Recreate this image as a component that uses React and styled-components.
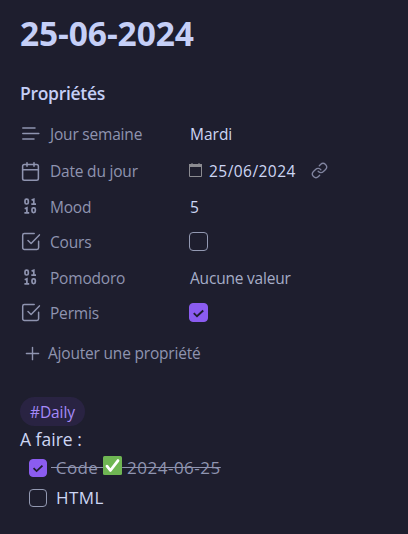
import React, { useState } from "react";
import styled, { createGlobalStyle } from "styled-components";
import { Calendar, Link, Plus } from "lucide-react";

const properties = [
  { name: "Jour semaine", icon: "text", value: "Mardi", height: 36 },
  { name: "Date du jour", icon: "date", value: "25/06/2024", height: 38 },
  { name: "Mood", icon: "number", value: "5", height: 34 },
  { name: "Cours", icon: "checkbox", value: false, height: 35 },
  { name: "Pomodoro", icon: "number", value: null, height: 37 },
  { name: "Permis", icon: "checkbox", value: true, height: 33 },
];

const TextIcon = () => (
  <svg width="21" height="20" viewBox="0 0 21 20" fill="none" stroke="currentColor" strokeWidth="1.5" strokeLinecap="round">
    <path d="M2.8 4H15M2.8 9.5h16M2.8 15H14" />
  </svg>
);

const NumberIcon = () => (
  <svg width="21" height="20" viewBox="0 0 21 20" fill="none" stroke="currentColor" strokeWidth="1.7">
    <rect x="5" y="2.2" width="3.3" height="4.8" rx="1.5" />
    <path d="M11.6 3.1l2.2-.9v5M11.3 7.2H16" />
    <path d="M4.7 11.7l2.2-.9v5M4.4 15.8h4.8" />
    <rect x="12" y="10.8" width="3.3" height="4.8" rx="1.5" />
  </svg>
);

const CheckboxIcon = () => (
  <svg width="21" height="20" viewBox="0 0 21 20" fill="none" stroke="currentColor" strokeWidth="1.5" strokeLinecap="round" strokeLinejoin="round">
    <path d="m8 8.5 3.1 3 8.3-8.6" />
    <path d="M18.6 9.3v6.4a1.7 1.7 0 0 1-1.7 1.7H4.4a1.7 1.7 0 0 1-1.7-1.7V3.3a1.7 1.7 0 0 1 1.7-1.7h9.8" />
  </svg>
);

const icons = {
  text: <TextIcon />,
  date: <Calendar size={21} strokeWidth={1.75} />,
  number: <NumberIcon />,
  checkbox: <CheckboxIcon />,
};

const Checkbox = ({ checked, onChange, size = 19 }) => (
  <Box role="checkbox" aria-checked={checked} $checked={checked} $size={size} onClick={onChange}>
    {checked && (
      <svg width="18" height="18" viewBox="0 0 18 18" fill="none" stroke="#1e1e2e" strokeWidth="2">
        <path d="m4 9.2 3.4 3.3 6.6-6.2" />
      </svg>
    )}
  </Box>
);

const PropertyValue = ({ property }) => {
  const [checked, setChecked] = useState(property.value);

  if (property.icon === "checkbox") {
    return <Checkbox checked={checked} onChange={() => setChecked(!checked)} />;
  }
  if (property.icon === "date") {
    return (
      <>
        <DateIcon width="13" height="14" viewBox="0 0 13 14" fill="none">
          <path d="M3 0v2M10 0v2" stroke="#8b8b91" />
          <path d="M.5 2.5h12v11H.5z" stroke="#8b8b91" />
          <path d="M0 1h13v3H0z" fill="#8b8b91" />
        </DateIcon>
        <DateText>{property.value}</DateText>
        <LinkIcon size={17} strokeWidth={1.9} color="#80849f" />
      </>
    );
  }
  if (property.value === null) {
    return <Empty>Aucune valeur</Empty>;
  }
  return <Text>{property.value}</Text>;
};

const App = () => {
  return (
    <Note>
      <GlobalStyle />
      <Title>25-06-2024</Title>
      <Heading>Propriétés</Heading>
      <Properties>
        {properties.map((property) => (
          <Row key={property.name} $height={property.height}>
            <Key>
              {icons[property.icon]}
              <Label>{property.name}</Label>
            </Key>
            <Value>
              <PropertyValue property={property} />
            </Value>
          </Row>
        ))}
      </Properties>
      <AddButton>
        <Plus size={21} strokeWidth={1.6} />
        <Label>Ajouter une propriété</Label>
      </AddButton>
      <Tag>#Daily</Tag>
      <Paragraph>A faire :</Paragraph>
      <Task>
        <Checkbox checked size={18} />
        <Done>
          {" Code "}
          <Emoji width="19" height="19" viewBox="0 0 19 19" fill="none" role="img" aria-label="✅">
            <rect width="19" height="19" rx="1.5" fill="#6fb653" />
            <path d="m4 10.2 3.4 4.3L15 4.6" stroke="#fff" strokeWidth="2.8" strokeLinecap="round" strokeLinejoin="round" />
          </Emoji>
          <DoneDate>{" 2024-06-25"}</DoneDate>
        </Done>
      </Task>
      <Task>
        <Checkbox checked={false} size={18} />
        <TaskText>HTML</TaskText>
      </Task>
    </Note>
  );
};

const GlobalStyle = createGlobalStyle`
  body {
    margin: 0;
    background: #1e1e2e;
  }
`;

const Note = styled.div`
  box-sizing: border-box;
  width: 408px;
  height: 534px;
  padding: 10px 20px 0;
  overflow: hidden;
  display: flex;
  flex-direction: column;
  background: #1e1e2e;
  color: #cdd6f4;
  font-family: "Open Sans", "Noto Sans", sans-serif;
  font-size: 16px;
`;

const Title = styled.h1`
  margin: 0;
  height: 46px;
  line-height: 46px;
  font-size: 33.5px;
  font-weight: 700;
  letter-spacing: -0.1px;
  color: #c5cff7;
`;

const Heading = styled.h2`
  margin: 23px 0 0;
  height: 28px;
  line-height: 28px;
  font-size: 17.5px;
  font-weight: 600;
  letter-spacing: -0.3px;
  color: #c5cff7;
`;

const Properties = styled.div`
  margin-top: 9px;
`;

const Row = styled.div`
  display: flex;
  align-items: center;
  height: ${(props) => props.$height}px;
`;

const Key = styled.div`
  display: flex;
  align-items: center;
  gap: 9px;
  width: 169px;
  color: #8f94b0;
`;

const Label = styled.span`
  font-size: 15.5px;
  letter-spacing: -0.2px;
`;

const Value = styled.div`
  display: flex;
  align-items: center;
`;

const Text = styled.span`
  margin-left: 1px;
  font-size: 15.5px;
`;

const Empty = styled(Text)`
  color: #a6adc8;
  letter-spacing: -0.2px;
`;

const DateIcon = styled.svg`
  margin-bottom: 2px;
`;

const DateText = styled.span`
  margin: 0 15px 0 7px;
  font-size: 15.5px;
  letter-spacing: 0.45px;
`;

const LinkIcon = styled(Link)`
  margin-bottom: 2px;
`;

const Box = styled.span`
  box-sizing: border-box;
  flex: none;
  display: flex;
  align-items: center;
  justify-content: center;
  width: ${(props) => props.$size}px;
  height: ${(props) => props.$size}px;
  border: 1px solid ${(props) => (props.$checked ? "#8b5cf0" : "#9399b2")};
  border-radius: 4px;
  background: ${(props) => (props.$checked ? "#8b5cf0" : "transparent")};
`;

const AddButton = styled.button`
  display: flex;
  align-items: center;
  gap: 5px;
  height: 32px;
  margin: 8px 0 0 2px;
  padding: 0;
  border: none;
  background: none;
  color: #8f94b0;
  font-family: inherit;
`;

const Tag = styled.a`
  box-sizing: border-box;
  align-self: flex-start;
  height: 29px;
  margin-top: 28px;
  padding: 0 10px;
  border-radius: 15px;
  background: #292342;
  color: #a68af9;
  font-size: 15.5px;
  letter-spacing: -0.1px;
  line-height: 30px;
`;

const Paragraph = styled.p`
  margin: 0;
  height: 27px;
  line-height: 26px;
  font-size: 17.5px;
`;

const Task = styled.div`
  display: flex;
  align-items: center;
  height: 30px;
  padding-left: 9px;
`;

const TaskText = styled.span`
  margin-left: 9px;
  padding-bottom: 1px;
  font-size: 17px;
  letter-spacing: 0.4px;
`;

const Done = styled.span`
  margin-left: 4px;
  padding-bottom: 2px;
  font-size: 17px;
  letter-spacing: 0.4px;
  white-space: pre;
  color: #8f94b0;
  text-decoration: line-through;
`;

const DoneDate = styled.span`
  letter-spacing: 0.5px;
`;

const Emoji = styled.svg`
  vertical-align: -1px;
`;

export default App;
